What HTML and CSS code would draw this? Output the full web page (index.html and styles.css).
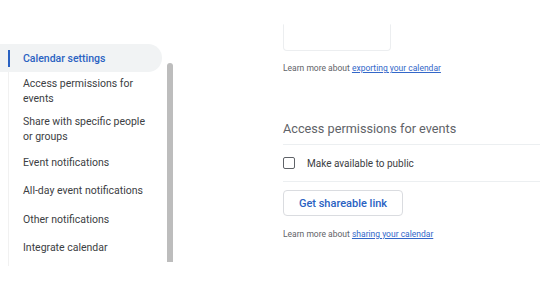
FILE: index.html
```html
<!DOCTYPE html>
<html lang="en">
<head>
    <meta charset="UTF-8">
    <meta name="viewport" content="width=device-width, initial-scale=1.0">
    <title>Settings</title>
    <link rel="stylesheet" href="styles.css">
</head>
<body>
    <div class="page">
        <div class="sidebar">
            <div class="nav">
                <div class="nav-active">
                    <span class="nav-bar"></span>
                    <span>Calendar settings</span>
                </div>
                <div class="nav-list">
                    <div class="nav-item two">Access permissions for<br>events</div>
                    <div class="nav-item two">Share with specific people<br>or groups</div>
                    <div class="nav-item">Event notifications</div>
                    <div class="nav-item">All-day event notifications</div>
                    <div class="nav-item">Other notifications</div>
                    <div class="nav-item">Integrate calendar</div>
                </div>
            </div>
            <div class="scrollbar"></div>
        </div>

        <div class="main">
            <div class="export-btn"></div>
            <p class="learn">Learn more about <a href="#">exporting your calendar</a></p>

            <h2 class="section-title">Access permissions for events</h2>
            <div class="check-row">
                <span class="checkbox"></span>
                <span>Make available to public</span>
            </div>
            <button class="share-btn">Get shareable link</button>
            <p class="learn learn-share">Learn more about <a href="#">sharing your calendar</a></p>
        </div>
    </div>
</body>
</html>
```

FILE: styles.css
```css
body {
    margin: 0;
    font-family: Roboto, "Liberation Sans", Arial, sans-serif;
    background-color: #fff;
    color: #3c4043;
    width: 540px;
    height: 304px;
    overflow: hidden;
}
.page {
    display: flex;
}
.sidebar {
    width: 173px;
    flex-shrink: 0;
    display: flex;
    padding-top: 44px;
}
.nav {
    width: 162px;
}
.nav-active {
    display: flex;
    align-items: center;
    height: 28px;
    padding-left: 8px;
    background-color: #f1f3f4;
    border-radius: 0 14px 14px 0;
    color: #2a62c2;
    font-size: 10.5px;
    font-weight: 500;
}
.nav-bar {
    width: 2px;
    height: 17px;
    background-color: #2a62c2;
    margin-right: 13px;
}
.nav-list {
    margin-left: 8px;
    border-left: 1px solid #f1f1f1;
    padding-left: 14px;
    padding-bottom: 4px;
}
.nav-item {
    font-size: 10.5px;
    line-height: 15px;
    padding: 6.75px 0;
}
.nav-item.two {
    padding: 4px 0;
}
.scrollbar {
    width: 6px;
    height: 199px;
    margin-top: 19px;
    margin-left: 5px;
    background-color: #bdbdbd;
    border-radius: 3px 3px 0 0;
}
.main {
    margin-left: 110px;
    flex: 1;
    padding-top: 24px;
}
.export-btn {
    width: 106px;
    height: 25px;
    border: 1px solid #eceef0;
    border-top-color: transparent;
    border-radius: 0 0 4px 4px;
}
.learn {
    margin: 11px 0 0;
    font-size: 8.5px;
    line-height: 12px;
    color: #5f6368;
}
.learn-share {
    margin-top: 12px;
}
.learn a {
    color: #3367c9;
}
.section-title {
    margin: 46px 0 0;
    font-size: 12.7px;
    font-weight: 400;
    line-height: 18px;
    color: #5f6368;
    padding-bottom: 6px;
    border-bottom: 1px solid #eceff1;
}
.check-row {
    display: flex;
    align-items: center;
    height: 36px;
    font-size: 10px;
    border-bottom: 1px solid #eceff1;
}
.checkbox {
    width: 10px;
    height: 10px;
    border: 1.5px solid #5f6368;
    border-radius: 2px;
    margin-right: 12px;
}
.share-btn {
    display: block;
    margin-top: 8px;
    width: 120px;
    height: 26px;
    background-color: #fff;
    border: 1px solid #dadce0;
    border-radius: 4px;
    font-family: inherit;
    font-size: 11px;
    font-weight: 500;
    color: #2a62c2;
    padding: 0;
}
```
